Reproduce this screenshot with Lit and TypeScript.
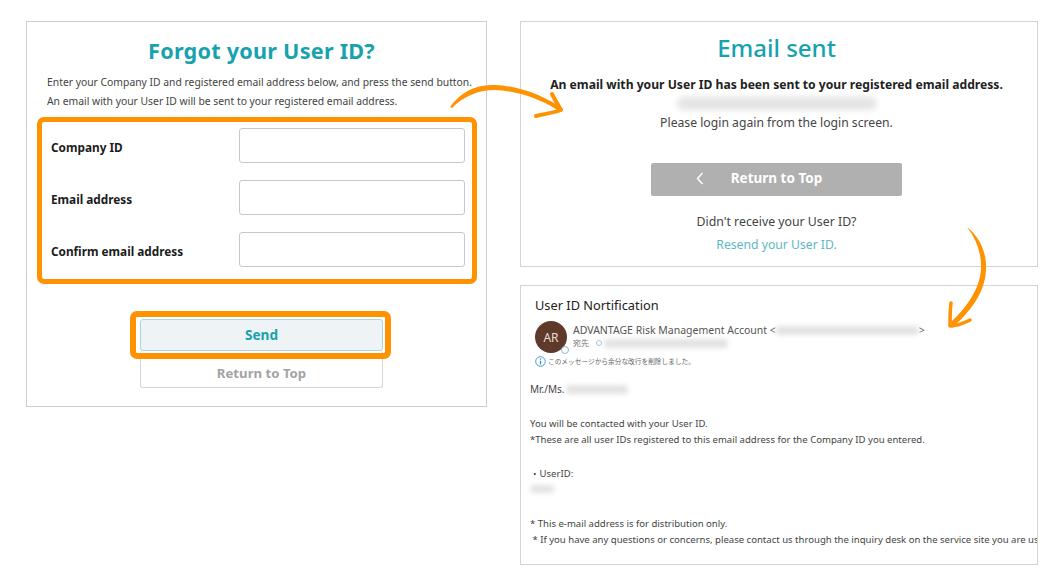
import { LitElement, html, css } from "lit";
import { customElement } from "lit/decorators.js";

@customElement("forgot-panel")
export class ForgotPanel extends LitElement {
  static styles = css`
    :host {
      display: block;
      width: 461px;
      height: 386px;
      box-sizing: border-box;
      border: 1px solid #cfcfcf;
      background: #fff;
      font-family: "Noto Sans", sans-serif;
    }
    h1 {
      margin: 13px 0 0 10px;
      text-align: center;
      font-size: 21.6px;
      line-height: 32px;
      font-weight: 700;
      letter-spacing: 0.25px;
      color: #17a2ae;
    }
    .intro {
      margin: 6px 0 0 20px;
      font-size: 10.35px;
      line-height: 18.5px;
      color: #444;
      white-space: nowrap;
    }
    .form {
      position: relative;
      margin: 7px 9px 0 10px;
      height: 167px;
      box-sizing: border-box;
      padding: 11px 12px 0 14px;
      display: flex;
      flex-direction: column;
      gap: 17.5px;
    }
    .ring {
      position: absolute;
      box-sizing: border-box;
      border: 5px solid #ff9200;
      border-radius: 7px;
      pointer-events: none;
    }
    .form .ring {
      inset: 0;
    }
    .row {
      display: flex;
      align-items: center;
      justify-content: space-between;
      height: 34.5px;
      font-size: 11.8px;
      font-weight: 700;
      color: #1c1c1c;
    }
    .row span {
      padding-top: 4px;
    }
    input {
      width: 226px;
      height: 34.5px;
      box-sizing: border-box;
      border: 1px solid #c8c8c8;
      border-radius: 3px;
      background: #fff;
      padding: 0;
      margin: 0;
    }
    .actions {
      position: relative;
      margin: 35px 0 0 113px;
      width: 243px;
      display: flex;
      flex-direction: column;
    }
    .actions .ring {
      top: -8px;
      left: -10px;
      right: -8px;
      height: 48px;
      border-width: 6px;
    }
    button {
      width: 243px;
      font-family: inherit;
      font-weight: 700;
      padding: 0;
      margin: 0;
      border-radius: 3px;
      box-sizing: border-box;
    }
    .send {
      height: 32px;
      font-size: 13.6px;
      background: #eef3f6;
      border: 1px solid #a5d8de;
      color: #17a2ae;
      padding-bottom: 2px;
    }
    .back {
      height: 37px;
      font-size: 13.2px;
      background: #fff;
      border: 1px solid #d6d6d6;
      border-top: none;
      color: #a3a3a3;
      padding-top: 7px;
    }
  `;

  render() {
    return html`
      <h1>Forgot your User ID?</h1>
      <p class="intro">
        Enter your Company ID and registered email address below, and press the send button.<br />
        An email with your User ID will be sent to your registered email address.
      </p>
      <div class="form">
        <label class="row"><span>Company ID</span> <input /></label>
        <label class="row"><span>Email address</span> <input /></label>
        <label class="row"><span>Confirm email address</span> <input /></label>
        <div class="ring"></div>
      </div>
      <div class="actions">
        <button class="send">Send</button>
        <button class="back">Return to Top</button>
        <div class="ring"></div>
      </div>
    `;
  }
}

@customElement("sent-panel")
export class SentPanel extends LitElement {
  static styles = css`
    :host {
      display: block;
      height: 246px;
      box-sizing: border-box;
      border: 1px solid #d4d4d4;
      background: #fff;
      font-family: "Noto Sans", sans-serif;
      text-align: center;
      color: #444;
      padding-right: 5px;
    }
    h1 {
      margin: 9px 0 0;
      font-size: 24px;
      line-height: 33px;
      font-weight: 500;
      color: #17a2ae;
    }
    .lead {
      margin: 11px 0 0;
      font-size: 12.15px;
      line-height: 20px;
      font-weight: 700;
      color: #222;
    }
    .smudge {
      width: 200px;
      height: 13px;
      margin: 2px auto 0;
      background: #e4e4e4;
      border-radius: 7px;
      filter: blur(3px);
    }
    .again {
      margin: 3px 0 0;
      font-size: 12.2px;
      line-height: 20px;
    }
    .top {
      width: 251px;
      height: 33px;
      box-sizing: border-box;
      padding-bottom: 3px;
      margin: 30px 0 0 130px;
      display: flex;
      align-items: center;
      justify-content: center;
      position: relative;
      background: #b0b0b0;
      border-radius: 2px;
      color: #fff;
      font-size: 13.5px;
      font-weight: 700;
    }
    .top svg {
      position: absolute;
      left: 45px;
      top: 9px;
    }
    .q {
      margin: 16px 0 0;
      font-size: 12.3px;
      line-height: 20px;
    }
    .link {
      margin: 3px 0 0;
      font-size: 12.2px;
      line-height: 20px;
      color: #5db8c2;
    }
  `;

  render() {
    return html`
      <h1>Email sent</h1>
      <p class="lead">An email with your User ID has been sent to your registered email address.</p>
      <div class="smudge"></div>
      <p class="again">Please login again from the login screen.</p>
      <div class="top">
        <svg width="8" height="13" viewBox="0 0 8 13" fill="none" stroke="#fff" stroke-width="1.4">
          <path d="M6.5 1 1.5 6.5l5 5.5" />
        </svg>
        Return to Top
      </div>
      <p class="q">Didn't receive your User ID?</p>
      <p class="link">Resend your User ID.</p>
    `;
  }
}

@customElement("mail-panel")
export class MailPanel extends LitElement {
  static styles = css`
    :host {
      display: block;
      height: 280px;
      box-sizing: border-box;
      border: 1px solid #d4d4d4;
      background: #fff;
      font-family: "Noto Sans", "Noto Sans CJK JP", sans-serif;
      color: #444;
      overflow: hidden;
      padding: 0 0 0 9px;
      white-space: nowrap;
    }
    h2 {
      margin: 9px 0 0 5px;
      font-size: 12.8px;
      line-height: 20px;
      font-weight: 400;
      color: #222;
    }
    .head {
      display: flex;
      gap: 6px;
      margin: 6px 0 0 5px;
    }
    .avatar {
      position: relative;
      width: 32px;
      height: 32px;
      flex: none;
      border-radius: 50%;
      background: #5f3a2a;
      color: #e9dcd5;
      font-size: 12px;
      display: flex;
      align-items: center;
      justify-content: center;
    }
    .presence {
      position: absolute;
      right: -2px;
      bottom: -1px;
      width: 8px;
      height: 8px;
      box-sizing: border-box;
      border-radius: 50%;
      background: #fff;
      border: 1px solid #8fb4d6;
    }
    .who {
      font-size: 10.5px;
      line-height: 14px;
      margin-top: 2px;
      color: #555;
    }
    .who > div {
      display: flex;
      align-items: center;
    }
    .to {
      font-size: 8px;
      color: #777;
      gap: 7px;
      margin-top: -1px;
    }
    .dot {
      width: 6px;
      height: 6px;
      box-sizing: border-box;
      border: 1px solid #a9c6df;
      border-radius: 50%;
    }
    .blur {
      display: inline-block;
      background: #e2e2e2;
      border-radius: 4px;
      filter: blur(2.5px);
    }
    .info {
      display: flex;
      align-items: center;
      gap: 2px;
      margin: 2px 0 0 5px;
      font-size: 6.7px;
      line-height: 13px;
      color: #666;
    }
    .body {
      margin: 13px 0 0;
      font-size: 9.55px;
      line-height: 16.5px;
    }
    .body div {
      height: 16.5px;
    }
    .greet {
      font-size: 10px;
      display: flex;
      align-items: center;
      gap: 1px;
    }
    .gap {
      margin-top: 18px;
    }
    .gap-s {
      margin-top: 17px;
    }
  `;

  render() {
    return html`
      <h2>User ID Nortification</h2>
      <div class="head">
        <div class="avatar">AR<span class="presence"></span></div>
        <div class="who">
          <div>
            ADVANTAGE Risk Management Account &lt;<span class="blur" style="width:143px;height:9px"></span>&gt;
          </div>
          <div class="to">
            宛先
            <span class="dot"></span>
            <span class="blur" style="width:124px;height:9px;margin-left:-5px"></span>
          </div>
        </div>
      </div>
      <div class="info">
        <svg width="11" height="11" viewBox="0 0 11 11">
          <circle cx="5.5" cy="5.5" r="4.8" fill="none" stroke="#3f9bdc" />
          <path d="M5.5 2.4v1.3M5.5 4.8v3.6" stroke="#2f86c8" stroke-width="1.2" />
        </svg>
        このメッセージから余分な改行を削除しました。
      </div>
      <div class="body">
        <div class="greet">Mr./Ms.<span class="blur" style="width:62px;height:9px"></span></div>
        <div class="gap">You will be contacted with your User ID.</div>
        <div>*These are all user IDs registered to this email address for the Company ID you entered.</div>
        <div class="gap-s">・UserID:</div>
        <div><span class="blur" style="width:24px;height:8px"></span></div>
        <div class="gap-s">* This e-mail address is for distribution only.</div>
        <div>&nbsp;* If you have any questions or concerns, please contact us through the inquiry desk on the service site you are using.</div>
      </div>
    `;
  }
}

@customElement("app-root")
export class AppRoot extends LitElement {
  static styles = css`
    :host {
      display: block;
      position: relative;
      width: 1056px;
      height: 583px;
      overflow: hidden;
      background: #fff;
    }
    .page {
      display: flex;
      gap: 33px;
      padding: 21px 0 0 26px;
    }
    .right {
      width: 518px;
      display: flex;
      flex-direction: column;
      gap: 18px;
    }
    .arrows {
      position: absolute;
      inset: 0;
      pointer-events: none;
    }
  `;

  render() {
    return html`
      <div class="page">
        <forgot-panel></forgot-panel>
        <div class="right">
          <sent-panel></sent-panel>
          <mail-panel></mail-panel>
        </div>
      </div>
      <svg class="arrows" width="1056" height="583" fill="#ff9200" stroke-linecap="round" stroke-linejoin="round">
        <path d="M450 107C460 93 475 84 495 85C520 86 545 96 563 109L560 112C545 101 520 91 495 90C477 90 463 97 452 108Z" />
        <path d="M552 94C555 100 558 105 561 110C553 113 544 114 536 116" fill="none" stroke="#ff9200" stroke-width="4" />
        <path d="M967 227C981 238 987 255 986 270C985 293 970 312 952 328L949 324C964 310 979 292 981 270C982 255 977 240 967 227Z" />
        <path d="M951 303C950 311 950 319 950 326C957 326 964 323 970 320" fill="none" stroke="#ff9200" stroke-width="3.5" />
      </svg>
    `;
  }
}
